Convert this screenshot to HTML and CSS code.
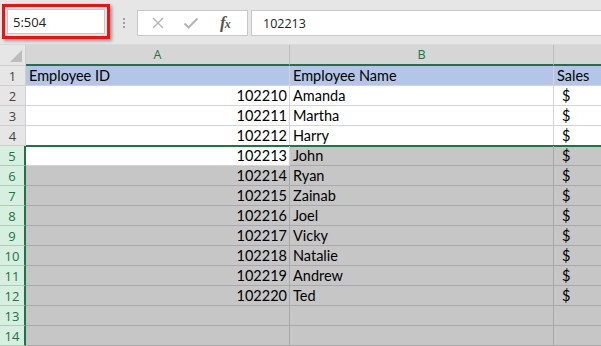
FILE: index.html
```html
<!DOCTYPE html>
<html>
<head>
<meta charset="utf-8">
<link rel="stylesheet" href="styles.css">
</head>
<body>
<div class="app">
  <div class="toolbar">
    <div class="namebox-mark">
      <div class="namebox">5:504</div>
    </div>
    <div class="grip"><i></i><i></i><i></i></div>
    <div class="fbuttons">
      <svg class="ico" width="14" height="14" viewBox="0 0 14 14"><path d="M2 2 L12 12 M12 2 L2 12" stroke="#b4b4b4" stroke-width="1.4" fill="none"/></svg>
      <svg class="ico" width="16" height="14" viewBox="0 0 16 14"><path d="M1.5 7.5 L5.5 11.5 L14.5 2.5" stroke="#b4b4b4" stroke-width="2" fill="none"/></svg>
      <span class="fx">f<span class="fxx">x</span></span>
    </div>
    <div class="formula">102213</div>
  </div>
  <div class="sheet">
    <div class="corner"><span class="tri"></span></div>
    <div class="colhdr">A</div>
    <div class="colhdr">B</div>
    <div class="colhdr last"></div>

    <div class="rowhdr">1</div>
    <div class="cell head">Employee ID</div>
    <div class="cell head">Employee Name</div>
    <div class="cell head last">Sales</div>

    <div class="rowhdr">2</div>
    <div class="cell num">102210</div>
    <div class="cell">Amanda</div>
    <div class="cell cur last">$</div>

    <div class="rowhdr">3</div>
    <div class="cell num">102211</div>
    <div class="cell">Martha</div>
    <div class="cell cur last">$</div>

    <div class="rowhdr">4</div>
    <div class="cell num">102212</div>
    <div class="cell">Harry</div>
    <div class="cell cur last">$</div>

    <div class="rowhdr sel">5</div>
    <div class="cell num active top">102213</div>
    <div class="cell s top">John</div>
    <div class="cell s cur top last">$</div>

    <div class="rowhdr sel">6</div>
    <div class="cell num s">102214</div>
    <div class="cell s">Ryan</div>
    <div class="cell s cur last">$</div>

    <div class="rowhdr sel">7</div>
    <div class="cell num s">102215</div>
    <div class="cell s">Zainab</div>
    <div class="cell s cur last">$</div>

    <div class="rowhdr sel">8</div>
    <div class="cell num s">102216</div>
    <div class="cell s">Joel</div>
    <div class="cell s cur last">$</div>

    <div class="rowhdr sel">9</div>
    <div class="cell num s">102217</div>
    <div class="cell s">Vicky</div>
    <div class="cell s cur last">$</div>

    <div class="rowhdr sel">10</div>
    <div class="cell num s">102218</div>
    <div class="cell s">Natalie</div>
    <div class="cell s cur last">$</div>

    <div class="rowhdr sel">11</div>
    <div class="cell num s">102219</div>
    <div class="cell s">Andrew</div>
    <div class="cell s cur last">$</div>

    <div class="rowhdr sel">12</div>
    <div class="cell num s">102220</div>
    <div class="cell s">Ted</div>
    <div class="cell s cur last">$</div>

    <div class="rowhdr sel">13</div>
    <div class="cell s"></div>
    <div class="cell s"></div>
    <div class="cell s last"></div>

    <div class="rowhdr sel">14</div>
    <div class="cell s"></div>
    <div class="cell s"></div>
    <div class="cell s last"></div>
  </div>
</div>
</body>
</html>
```
FILE: styles.css
```css
* { box-sizing: border-box; }
html, body { margin: 0; padding: 0; }
body { width: 601px; height: 346px; overflow: hidden; background: #fff; }
.app { width: 601px; height: 346px; overflow: hidden; }

.toolbar {
  height: 45px;
  background: #e6e6e6;
  display: flex;
  align-items: flex-start;
  padding-top: 4px;
  padding-left: 2px;
  border-bottom: 1px solid #dadada;
}
.namebox-mark {
  width: 108px;
  height: 35px;
  border: 3px solid #f01010;
  box-shadow: 2px 2px 3px rgba(0,0,0,0.35);
  padding: 2px;
}
.namebox {
  height: 100%;
  background: #fff;
  border: 1px solid #c6c6c6;
  font-family: "Open Sans", "DejaVu Sans", sans-serif;
  font-size: 13px;
  color: #222;
  padding-left: 5px;
  display: flex;
  align-items: center;
}
.grip {
  width: 27px;
  margin-top: 14px;
  display: flex;
  flex-direction: column;
  align-items: center;
  gap: 2px;
}
.grip i { display: block; width: 2px; height: 2px; background: #a0a0a0; }
.fbuttons {
  margin-top: 6px;
  width: 111px;
  height: 26px;
  background: #fff;
  border: 1px solid #c8c8c8;
  display: flex;
  align-items: center;
  padding-left: 13px;
}
.fbuttons .ico:nth-child(2) { margin-left: 18px; }
.fx {
  margin-left: 21px;
  font-family: "Liberation Serif", serif;
  font-style: italic;
  font-weight: bold;
  font-size: 17px;
  color: #555;
  letter-spacing: -1px;
}
.fxx { font-size: 12px; }
.formula {
  margin-top: 6px;
  margin-left: 3px;
  flex: 1;
  height: 26px;
  background: #fff;
  border: 1px solid #c8c8c8;
  border-right: none;
  font-family: "Open Sans", "DejaVu Sans", sans-serif;
  font-size: 12.5px;
  color: #222;
  padding-left: 11px;
  display: flex;
  align-items: center;
}

.sheet {
  display: grid;
  grid-template-columns: 26px 264px 264px 47px;
  grid-template-rows: 21px repeat(14, 20px);
  font-family: "Lato", "Open Sans", sans-serif;
}
.corner {
  background: #e6e6e6;
  border-right: 1px solid #cfcfcf;
  border-bottom: 1px solid #cfcfcf;
  position: relative;
}
.tri {
  position: absolute;
  right: 3px;
  bottom: 3px;
  width: 0; height: 0;
  border-left: 12px solid transparent;
  border-bottom: 12px solid #bcbcbc;
}
.colhdr {
  background: #d6d6d6;
  border-right: 1px solid #bdbdbd;
  border-bottom: 2px solid #217346;
  color: #217346;
  font-family: "Open Sans", "DejaVu Sans", sans-serif;
  font-size: 12.5px;
  display: flex;
  align-items: center;
  justify-content: center;
}
.colhdr.last { border-right: none; }
.rowhdr {
  background: #e6e6e6;
  border-right: 1px solid #cfcfcf;
  border-bottom: 1px solid #cfcfcf;
  color: #444;
  font-family: "Open Sans", "DejaVu Sans", sans-serif;
  font-size: 13px;
  display: flex;
  align-items: center;
  justify-content: center;
}
.rowhdr.sel {
  background: #d6efe1;
  color: #217346;
  border-right: 2px solid #217346;
  border-bottom-color: #9fd5b7;
}
.cell {
  border-right: 1px solid #d4d4d4;
  border-bottom: 1px solid #d4d4d4;
  font-size: 14.5px;
  color: #000;
  padding: 0 3px;
  display: flex;
  align-items: flex-end;
  line-height: 19px;
  white-space: nowrap;
  overflow: hidden;
}
.cell.last { border-right: none; }
.cell.head { background: #b4c6e7; }
.cell.num { justify-content: flex-end; padding-right: 2px; }
.cell.cur { padding-left: 8px; }
.cell.s {
  background: #c6c6c6;
  border-right-color: #a9a9a9;
  border-bottom-color: #a9a9a9;
}
.cell.active { background: #fff; }
.cell.top { box-shadow: 0 -1px 0 #217346, inset 0 1px 0 #217346; }
```
